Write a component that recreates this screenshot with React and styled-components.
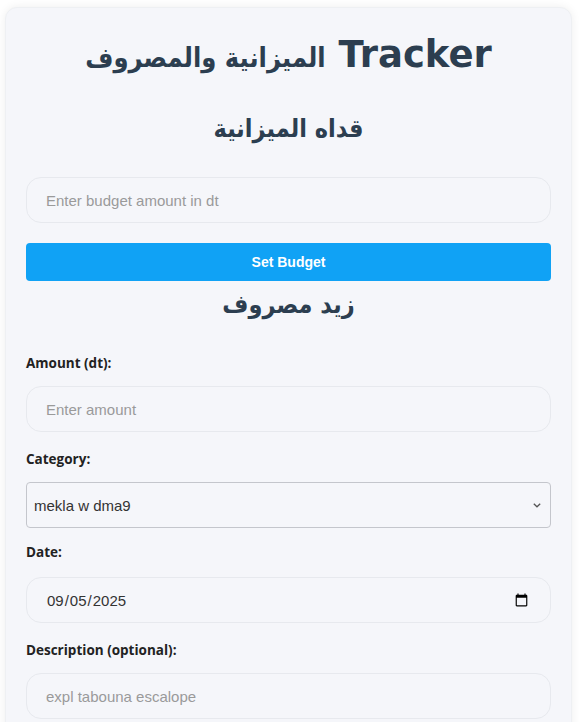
import styled, { createGlobalStyle } from 'styled-components';

const GlobalStyle = createGlobalStyle`
  * {
    box-sizing: border-box;
  }
  body {
    margin: 0;
    background: #ffffff;
    font-family: 'Open Sans', 'DejaVu Sans', sans-serif;
  }
`;

function App() {
  return (
    <>
      <GlobalStyle />
      <Page>
        <Card>
          <Title>
            <Arabic $size={27}>الميزانية والمصروف</Arabic> Tracker
          </Title>

          <SectionTitle $top={30}>
            <Arabic $size={25}>قداه الميزانية</Arabic>
          </SectionTitle>
          <TextInput type='number' placeholder='Enter budget amount in dt' $top={31} />
          <PrimaryButton type='button'>Set Budget</PrimaryButton>

          <SectionTitle $top={6}>
            <Arabic $size={25}>زيد مصروف</Arabic>
          </SectionTitle>
          <Form onSubmit={(e) => e.preventDefault()}>
            <Field>
              <Label>Amount (dt):</Label>
              <TextInput type='number' placeholder='Enter amount' />
            </Field>
            <Field>
              <Label>Category:</Label>
              <SelectWrap>
                <Select defaultValue='mekla'>
                  <option value='mekla'>mekla w dma9</option>
                  <option value='transport'>transport</option>
                  <option value='other'>other</option>
                </Select>
                <Chevron viewBox='0 0 8 5' aria-hidden='true'>
                  <path d='M0.8 0.8 L4 3.8 L7.2 0.8' />
                </Chevron>
              </SelectWrap>
            </Field>
            <Field $gap={15}>
              <Label $space={16}>Date:</Label>
              <TextInput type='date' defaultValue='2025-09-05' />
            </Field>
            <Field>
              <Label>Description (optional):</Label>
              <TextInput type='text' placeholder='expl tabouna escalope' />
            </Field>
          </Form>
        </Card>
      </Page>
    </>
  );
}

const Page = styled.div`
  padding: 7px 15px 0 5px;
`;

const Card = styled.div`
  background: #f5f6fa;
  border: 1px solid #eef0f3;
  border-radius: 12px;
  box-shadow: 0 0 10px rgba(0, 0, 0, 0.07);
  padding: 24px 20px 20px;
  min-height: 760px;
`;

const Title = styled.h1`
  margin: 0;
  text-align: center;
  font-family: 'DejaVu Sans', sans-serif;
  font-size: 37px;
  line-height: 46px;
  font-weight: 700;
  color: #2c3e50;
`;

const Arabic = styled.span`
  font-family: 'DejaVu Sans Condensed', 'DejaVu Sans', sans-serif;
  font-stretch: condensed;
  font-size: ${(p) => p.$size}px;
`;

const SectionTitle = styled.h2`
  margin: ${(p) => p.$top}px 0 0;
  text-align: center;
  font-family: 'DejaVu Sans', sans-serif;
  font-size: 26px;
  line-height: 34px;
  font-weight: 700;
  color: #2c3e50;
`;

const TextInput = styled.input`
  display: block;
  width: 100%;
  height: 46px;
  margin-top: ${(p) => p.$top || 0}px;
  padding: 0 19px;
  border: 1px solid #e7e9ee;
  border-radius: 15px;
  background: #f5f6fa;
  font-family: 'Liberation Sans', Arial, sans-serif;
  font-size: 15px;
  color: #333;
  outline: none;

  &::placeholder {
    color: #9a9a9a;
  }

  &::-webkit-outer-spin-button,
  &::-webkit-inner-spin-button {
    -webkit-appearance: none;
    margin: 0;
  }
`;

const PrimaryButton = styled.button`
  display: block;
  width: 100%;
  height: 38px;
  margin-top: 20px;
  border: none;
  border-radius: 4px;
  background: #10a2f5;
  color: #ffffff;
  font-family: 'Liberation Sans', Arial, sans-serif;
  font-size: 14px;
  font-weight: 700;
  cursor: pointer;
`;

const Form = styled.form`
  display: flex;
  flex-direction: column;
  gap: 18px;
  margin-top: 32px;
`;

const Field = styled.div`
  display: flex;
  flex-direction: column;
  margin-top: ${(p) => (p.$gap ? p.$gap - 18 : 0)}px;
`;

const Label = styled.label`
  font-size: 13.5px;
  line-height: 18px;
  font-weight: 700;
  color: #222;
  margin-bottom: ${(p) => p.$space || 14}px;
`;

const SelectWrap = styled.div`
  position: relative;
`;

const Select = styled.select`
  width: 100%;
  height: 46px;
  padding: 0 24px 0 7px;
  border: 1px solid #c4c6cc;
  border-radius: 4px;
  background: #f5f6fa;
  font-family: 'Liberation Sans', Arial, sans-serif;
  font-size: 15px;
  color: #333;
  outline: none;
  appearance: none;
  -webkit-appearance: none;
`;

const Chevron = styled.svg`
  position: absolute;
  right: 10px;
  top: 21px;
  width: 8px;
  height: 5px;
  fill: none;
  stroke: #555;
  stroke-width: 1.3;
  pointer-events: none;
`;

export default App;
